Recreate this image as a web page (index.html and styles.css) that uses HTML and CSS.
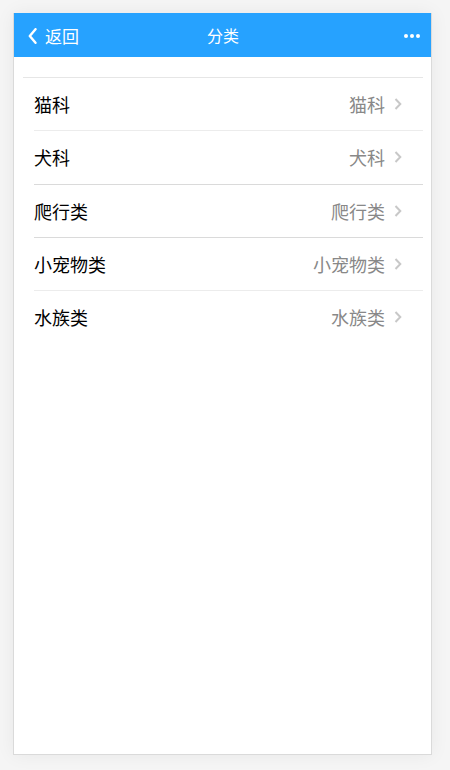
FILE: index.html
```html
<!DOCTYPE html>
<html lang="zh-CN">
<head>
<meta charset="utf-8">
<title>分类</title>
<link rel="stylesheet" href="styles.css">
</head>
<body>
<div class="phone">
  <header class="header">
    <div class="back">
      <svg class="back-icon" width="9" height="16" viewBox="0 0 9 16"><path d="M7.5 1.2 L1.8 8 L7.5 14.8" fill="none" stroke="#fff" stroke-width="2.4" stroke-linecap="round" stroke-linejoin="round"/></svg>
      <span>返回</span>
    </div>
    <div class="title">分类</div>
    <div class="more">
      <svg width="16" height="4" viewBox="0 0 16 4"><circle cx="2" cy="2" r="2" fill="#fff"/><circle cx="8" cy="2" r="2" fill="#fff"/><circle cx="14" cy="2" r="2" fill="#fff"/></svg>
    </div>
  </header>
  <div class="list">
    <div class="cell"><div class="cell-inner light"><span class="label">猫科</span><span class="value">猫科</span><svg class="arrow" width="8" height="12" viewBox="0 0 8 12"><path d="M1.5 1 L6.3 6 L1.5 11" fill="none" stroke="#c8c8c8" stroke-width="2"/></svg></div></div>
    <div class="cell"><div class="cell-inner dark"><span class="label">犬科</span><span class="value">犬科</span><svg class="arrow" width="8" height="12" viewBox="0 0 8 12"><path d="M1.5 1 L6.3 6 L1.5 11" fill="none" stroke="#c8c8c8" stroke-width="2"/></svg></div></div>
    <div class="cell"><div class="cell-inner dark"><span class="label">爬行类</span><span class="value">爬行类</span><svg class="arrow" width="8" height="12" viewBox="0 0 8 12"><path d="M1.5 1 L6.3 6 L1.5 11" fill="none" stroke="#c8c8c8" stroke-width="2"/></svg></div></div>
    <div class="cell"><div class="cell-inner light"><span class="label">小宠物类</span><span class="value">小宠物类</span><svg class="arrow" width="8" height="12" viewBox="0 0 8 12"><path d="M1.5 1 L6.3 6 L1.5 11" fill="none" stroke="#c8c8c8" stroke-width="2"/></svg></div></div>
    <div class="cell"><div class="cell-inner last"><span class="label">水族类</span><span class="value">水族类</span><svg class="arrow" width="8" height="12" viewBox="0 0 8 12"><path d="M1.5 1 L6.3 6 L1.5 11" fill="none" stroke="#c8c8c8" stroke-width="2"/></svg></div></div>
  </div>
</div>
</body>
</html>
```
FILE: styles.css
```css
html, body {
  margin: 0;
  padding: 0;
  background: #f5f5f5;
  font-family: "Noto Sans CJK SC", "Noto Sans", sans-serif;
}
body {
  padding: 13px 0 0 13px;
  height: 770px;
  box-sizing: border-box;
}
.phone {
  width: 417px;
  height: 741px;
  background: #fff;
  border: 1px solid #dadada;
  border-top: 0;
  box-shadow: 0 0 18px rgba(0, 0, 0, 0.06);
}
.header {
  height: 44px;
  background: #26a2ff;
  color: #fff;
  display: flex;
  align-items: center;
  position: relative;
  padding: 0 11px 0 14px;
}
.back {
  display: flex;
  align-items: center;
  gap: 8px;
  font-size: 17px;
  line-height: 1;
}
.back-icon {
  display: block;
  margin-top: 1px;
}
.title {
  position: absolute;
  left: 0;
  right: 0;
  text-align: center;
  font-size: 16px;
  pointer-events: none;
  padding-left: 1px;
}
.more {
  margin-left: auto;
  display: flex;
  align-items: center;
  margin-top: 1px;
}
.more svg { display: block; }
.list {
  margin: 20px 8px 0 9px;
  border-top: 1px solid #e6e6e6;
}
.cell {
  padding-left: 11px;
}
.cell-inner {
  height: 52.25px;
  display: flex;
  align-items: center;
  padding-right: 21px;
  font-size: 18px;
}
.cell-inner.light { border-bottom: 1px solid #ececec; }
.cell-inner.dark { border-bottom: 1px solid #dadada; }
.label {
  color: #000;
}
.value {
  margin-left: auto;
  color: #888;
}
.arrow {
  display: block;
  margin-left: 9px;
}
```
